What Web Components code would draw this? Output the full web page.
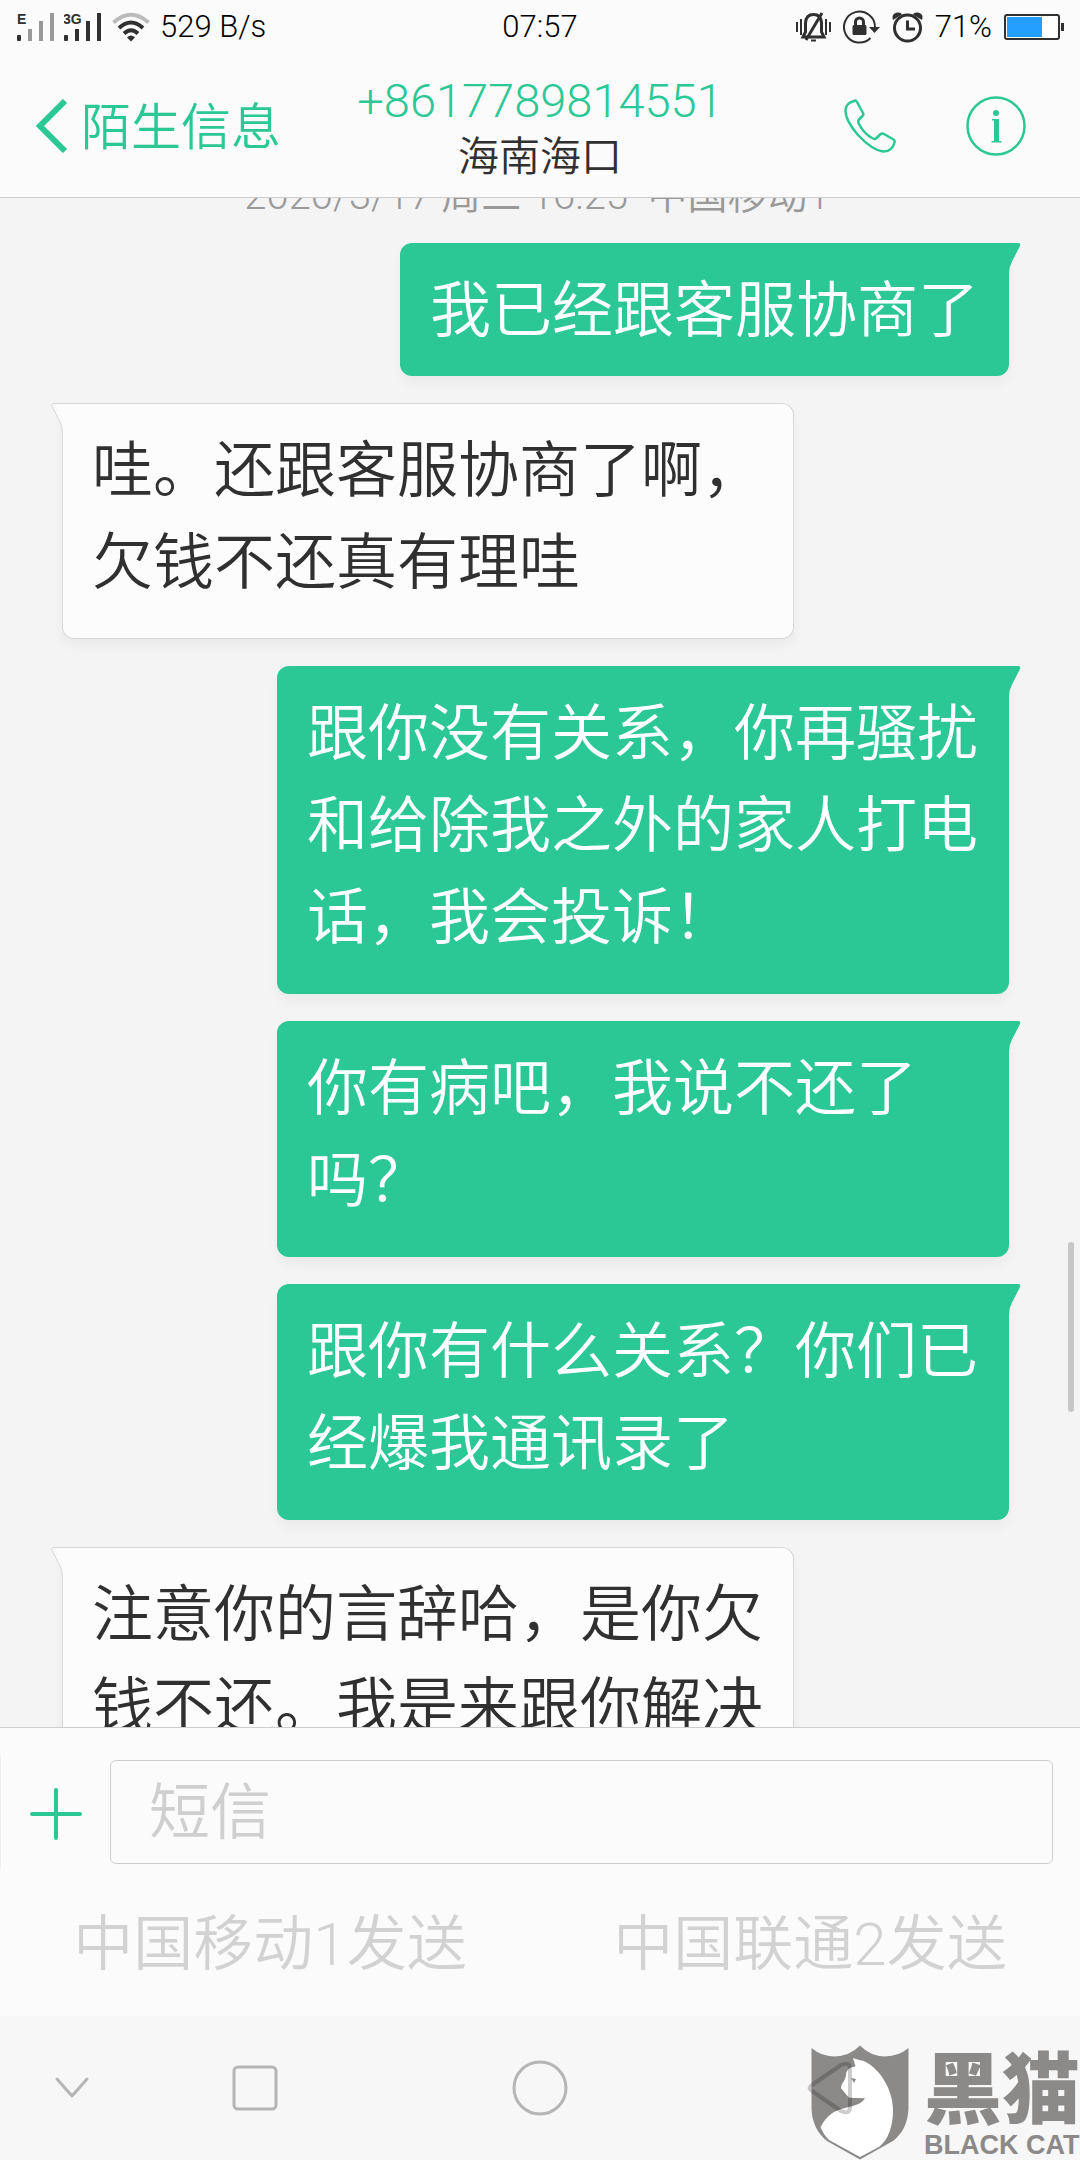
<!DOCTYPE html>
<html lang="zh-CN">
<head>
<meta charset="utf-8">
<meta name="viewport" content="width=device-width, initial-scale=1">
<title>短信</title>
<style>
  html, body { margin: 0; height: 100%; }
  body {
    background: #f4f4f4;
    color: #303030;
    font-family: Roboto, "Noto Sans CJK SC", sans-serif;
    font-weight: 350;
    --green: #2bc896;
    --panel: #fbfbfb;
    --line: #cecece;
  }
</style>
</head>
<body>
<phone-screen>
  <status-bar slot="top"></status-bar>
  <chat-header slot="top" back="陌生信息" number="+8617789814551" place="海南海口"></chat-header>
  <message-list>
    <time-stamp>2020/3/17 周二 16:25&nbsp; 中国移动1</time-stamp>
    <chat-bubble side="out" single>我已经跟客服协商了</chat-bubble>
    <chat-bubble side="in">哇。还跟客服协商了啊，欠钱不还真有理哇</chat-bubble>
    <chat-bubble side="out">跟你没有关系，你再骚扰和给除我之外的家人打电话，我会投诉！</chat-bubble>
    <chat-bubble side="out">你有病吧，我说不还了吗？</chat-bubble>
    <chat-bubble side="out">跟你有什么关系？你们已经爆我通讯录了</chat-bubble>
    <chat-bubble side="in">注意你的言辞哈，是你欠钱不还。我是来跟你解决</chat-bubble>
  </message-list>
  <message-composer slot="bottom"></message-composer>
  <nav-bar slot="bottom"><brand-mark></brand-mark></nav-bar>
</phone-screen>

<script>
const define = (name, html, setup) => {
  const template = document.createElement('template');
  template.innerHTML = html;
  customElements.define(name, class extends HTMLElement {
    constructor() {
      super();
      this.attachShadow({ mode: 'open' }).append(template.content.cloneNode(true));
    }
    connectedCallback() { if (setup) setup(this, this.shadowRoot); }
  });
};

const buttonReset = `button{appearance:none;border:0;margin:0;padding:0;background:none;font:inherit;color:inherit;cursor:pointer}svg{display:block;flex:none}`;

define('phone-screen', `
<style>
  :host{display:flex;flex-direction:column;height:100vh;position:relative;overflow:hidden}
  main{flex:1;min-height:0;display:flex;flex-direction:column}
</style>
<slot name="top"></slot>
<main><slot></slot></main>
<slot name="bottom"></slot>`);

define('status-bar', `
<style>
  :host{display:grid;grid-template-columns:1fr auto 1fr;align-items:center;height:54px;padding:0 16px;background:var(--panel);color:#000;font-size:31px;line-height:54px;font-weight:300;white-space:nowrap}
  div{display:flex;align-items:center}
  .left{gap:10px}
  .right{gap:12px;justify-content:flex-end}
  svg{display:block;flex:none}
  svg text{font:700 14px "Liberation Sans",sans-serif;fill:#303030}
</style>
<div class="left">
  <svg width="38" height="30" viewBox="0 0 38 30" fill="#999"><text x="1" y="12">E</text><rect x="1" y="23" width="4" height="6" rx="1" fill="#303030"/><rect x="12" y="17" width="4" height="12"/><rect x="23" y="9" width="4" height="20"/><rect x="34" y="1" width="4" height="28"/></svg>
  <svg width="38" height="30" viewBox="0 0 38 30" fill="#303030"><text x="-1" y="12">3G</text><rect x="0" y="23" width="4" height="6" rx="1"/><rect x="11" y="17" width="4" height="12"/><rect x="22" y="9" width="4" height="20"/><rect x="33" y="1" width="4" height="28"/></svg>
  <svg width="38" height="30" viewBox="0 0 38 30" fill="none" stroke="#303030" stroke-width="4"><path d="M1.500 10.500Q19-5 36.500 10.500" stroke="#bbb"/><path d="M7 16Q19 5 31 16"/><path d="M12 21.500Q19 15 26 21.500"/><path d="M15 25.500Q19 21.500 23 25.500L19 29.500Z" fill="#303030" stroke="none"/></svg>
  <span>529 B/s</span>
</div>
<span>07:57</span>
<div class="right">
  <svg width="35" height="32" viewBox="0 0 35 32" fill="none" stroke="#303030" stroke-width="2"><path d="M1 11v10M5 8v16M30 8v16M34 11v10"/><path d="M7 26H28L25.500 21V12Q25 3.500 17.500 3.500Q10 3.500 9.500 12V21Z" stroke-width="3"/><path d="M26 2L10 29" stroke-width="3"/><path d="M15 29.500h5"/></svg>
  <svg width="37" height="34" viewBox="0 0 37 34" fill="none" stroke="#303030" stroke-width="2"><path d="M27.500 28A15.500 15.500 0 1 1 32 17"/><path d="M26 17h11l-5.500 6z" fill="#303030" stroke="none"/><rect x="9.500" y="15" width="14" height="10" rx="1.500" fill="#303030" stroke="none"/><path d="M12.500 16v-4a4 4 0 0 1 8 0v4" stroke-width="3"/></svg>
  <svg width="31" height="32" viewBox="0 0 31 32" fill="none" stroke="#303030" stroke-width="3"><circle cx="15.500" cy="17" r="13"/><path d="M15.500 9.500V18H23"/><path d="M1 9Q-1 3 5 1.500Q9 1 10 3.500ZM30 9Q32 3 26 1.500Q22 1 21 3.500Z" fill="#303030" stroke="none"/></svg>
  <span>71%</span>
  <svg width="60" height="28" viewBox="0 0 60 28"><rect x="1" y="2" width="54" height="24" rx="2" fill="#fff" stroke="#303030" stroke-width="2"/><rect x="3" y="4" width="35" height="20" fill="#259fff"/><rect x="57" y="10" width="3" height="8" fill="#303030"/></svg>
</div>`);

define('chat-header', `
<style>${buttonReset}
  :host{display:grid;grid-template-columns:1fr auto 1fr;align-items:center;height:143px;padding:0 36px;background:var(--panel);border-bottom:1px solid var(--line);color:var(--green);white-space:nowrap}
  .back{display:flex;align-items:center;gap:13px;font-size:50px;line-height:60px;justify-self:start}
  .back span{padding-top:4px}
  .title{display:flex;flex-direction:column;align-items:center;padding-top:8px}
  .number{font-size:47px;line-height:54px;font-weight:300}
  .place{font-size:41px;line-height:58px;color:#303030}
  .actions{display:flex;align-items:center;justify-content:flex-end;gap:70px;padding-right:18px}
</style>
<button class="back" type="button"><svg width="32" height="54" viewBox="0 0 32 54" fill="none" stroke="#2bc896" stroke-width="6"><path d="M29 2L4 27L29 52"/></svg><span></span></button>
<div class="title"><span class="number"></span><span class="place"></span></div>
<div class="actions">
  <button type="button" aria-label="拨打电话"><svg width="52" height="54" viewBox="0 0 52 54" fill="none" stroke="#2bc896" stroke-width="2.500" stroke-linejoin="round"><path d="M10 2Q12 1 13 3L19 14Q20 16 18 17.500L15 20.500Q13.500 22 15 25Q20 35 29 39.500Q31 40.500 32.500 39L36 35.500Q38 34 40 35L49.500 40.500Q51 41.500 50.500 43.500Q48 53 39 52.500Q28 51 14 36Q1 21 1.500 11Q2 4 10 2Z"/></svg></button>
  <button type="button" aria-label="详情"><svg width="60" height="60" viewBox="0 0 60 60" fill="#2bc896"><circle cx="30" cy="30" r="28.500" fill="none" stroke="#2bc896" stroke-width="2.500"/><circle cx="30" cy="17" r="3"/><path d="M26 23h7v22h2.500v1.500h-10V45H28V24.500h-2z"/></svg></button>
</div>`, (host, root) => {
  root.querySelector('.back span').textContent = host.getAttribute('back');
  root.querySelector('.number').textContent = host.getAttribute('number');
  root.querySelector('.place').textContent = host.getAttribute('place');
});

define('time-stamp', `
<style>:host{display:block;text-align:center;font-size:40px;line-height:40px;color:#999;white-space:nowrap;margin-right:6px}</style>
<slot></slot>`);

define('chat-bubble', `
<style>
  :host{--pad-end:30px;display:flex;padding:0 71px 0 62px;font-size:61px;line-height:92px}
  :host([single]){--pad-end:19px}
  :host([side="out"]){justify-content:flex-end;color:#fff}
  .box{position:relative;box-sizing:border-box;max-width:732px;padding:22px 30px var(--pad-end);border-radius:12px;box-shadow:0 8px 12px rgba(0,0,0,.04)}
  :host([side="out"]) .box{background:var(--green);border-top-right-radius:0}
  :host([side="in"]) .box{background:#fcfcfc;box-shadow:0 0 0 1px #d6d6d6 inset,0 8px 12px rgba(0,0,0,.04);border-top-left-radius:0}
  svg{position:absolute;top:0;display:none}
  :host([side="out"]) .out{display:block;left:100%}
  :host([side="in"]) .in{display:block;right:calc(100% - 2px)}
</style>
<div class="box"><slot></slot>
  <svg class="out" width="12" height="30" viewBox="0 0 12 30"><path d="M-1 0H9.500Q12 .5 11 3L3 18.500Q0 24 0 30H-1Z" fill="#2bc896"/></svg>
  <svg class="in" width="13" height="30" viewBox="0 0 13 30"><path d="M13 0H1V3L8 18Q11 24 11 30H13Z" fill="#fcfcfc"/><path d="M13 .5H2Q0 .5 1 3L8.500 18Q11.500 24 11.500 30" fill="none" stroke="#d6d6d6"/></svg>
</div>`);

define('message-list', `
<style>
  :host{display:block;flex:1;min-height:0;position:relative}
  .scroller{height:100%;overflow-y:auto;scrollbar-width:none}
  .thread{display:flex;flex-direction:column;gap:27px;padding-bottom:27px}
  .thumb{position:absolute;right:6px;top:1044px;width:6px;height:170px;border-radius:3px;background:#c8c8c8}
</style>
<div class="scroller"><div class="thread"><slot></slot></div></div>
<div class="thumb"></div>`);

define('message-composer', `
<style>${buttonReset}
  :host{display:block;background:var(--panel);border-top:1px solid var(--line);padding-top:28px}
  .entry{display:flex;align-items:center;padding:4px 27px 4px 0;border-left:1px solid #eee}
  .add{flex:none;width:109px;height:104px;padding-top:4px;display:grid;place-items:center}
  input{flex:1;min-width:0;height:104px;box-sizing:border-box;border:1px solid var(--line);border-radius:6px;background:transparent;padding:2px 38px 0;font:inherit;font-size:61px;color:#303030;outline:0}
  input::placeholder{color:#cfcfcf;opacity:1}
  .send{display:grid;grid-template-columns:1fr 1fr;height:148px;box-sizing:border-box;padding-bottom:8px;color:#d2d2d2;font-size:60px;white-space:nowrap}
</style>
<div class="entry">
  <button class="add" type="button" aria-label="添加"><svg width="52" height="52" viewBox="0 0 52 52" stroke="#2bc896" stroke-width="4" stroke-linecap="round"><path d="M26 2V50M2 26H50"/></svg></button>
  <input type="text" placeholder="短信" aria-label="短信">
</div>
<div class="send"><button type="button">中国移动1发送</button><button type="button">中国联通2发送</button></div>`);

define('nav-bar', `
<style>${buttonReset}
  :host{display:grid;grid-template-columns:144fr 222fr 348fr 222fr 144fr;height:144px;background:#f7f7f7;position:relative;isolation:isolate}
  button{display:grid;place-items:center}
  svg{fill:none;stroke:#b5b5b5;stroke-width:3;stroke-linejoin:round;stroke-linecap:round}
  .return{stroke:rgba(0,0,0,.2);stroke-width:4}
  ::slotted(*){z-index:-1}
</style>
<button type="button" aria-label="收起"><svg width="36" height="24" viewBox="0 0 36 24"><path d="M3 3L18 20L33 3"/></svg></button>
<button type="button" aria-label="最近任务"><svg width="46" height="46" viewBox="0 0 46 46"><rect x="2" y="2" width="42" height="42" rx="4"/></svg></button>
<button type="button" aria-label="主屏幕"><svg width="56" height="56" viewBox="0 0 56 56"><circle cx="28" cy="28" r="26"/></svg></button>
<button type="button" aria-label="返回"><svg class="return" width="56" height="54" viewBox="-10 0 56 54"><path d="M5 24L34 4Q43 0 43 8V46Q43 54 34 50L5 30Q0 27 5 24Z"/></svg></button>
<slot></slot>`);

define('brand-mark', `
<style>
  :host{position:absolute;right:0;bottom:0;display:flex;align-items:flex-end;gap:15px;color:#8c8989;pointer-events:none;white-space:nowrap}
  svg{display:block;flex:none}
  .words{display:flex;flex-direction:column}
  .cn{font:900 78px/84px "Noto Sans CJK SC",sans-serif;margin-bottom:4px}
  .en{font:700 27px/30px "Liberation Sans",sans-serif}
</style>
<svg width="98" height="115" viewBox="0 0 98 115"><path d="M.5 3Q10 11 23 11.500Q39 11 49 .5Q59 11 74 11.500Q88 11 97.500 3V63Q97 84 82 96L49 114.500L16 96Q1 84 .5 63Z" fill="#8c8989"/><path d="M42 13L48 15L52 15.700C66 21 82 42 82 65C82 82 77 95 68 102L49 112L18 95Q12 89 9.500 82C16 70 24 65 34 63C42 61 50 60 54 53.300L38 52.700L30 43.300C30 38 34 37 35 30C35 25 39 22 44.500 21.500Z" fill="#fff"/><path d="M40 33l5 1-2 4z" fill="#8c8989"/></svg>
<div class="words"><span class="cn">黑猫</span><span class="en">BLACK CAT</span></div>`);

/* Open the thread slightly scrolled, with the time stamp leaving at the top. */
document.querySelector('message-list').shadowRoot.querySelector('.scroller').scrollTop = 22;
</script>
</body>
</html>
